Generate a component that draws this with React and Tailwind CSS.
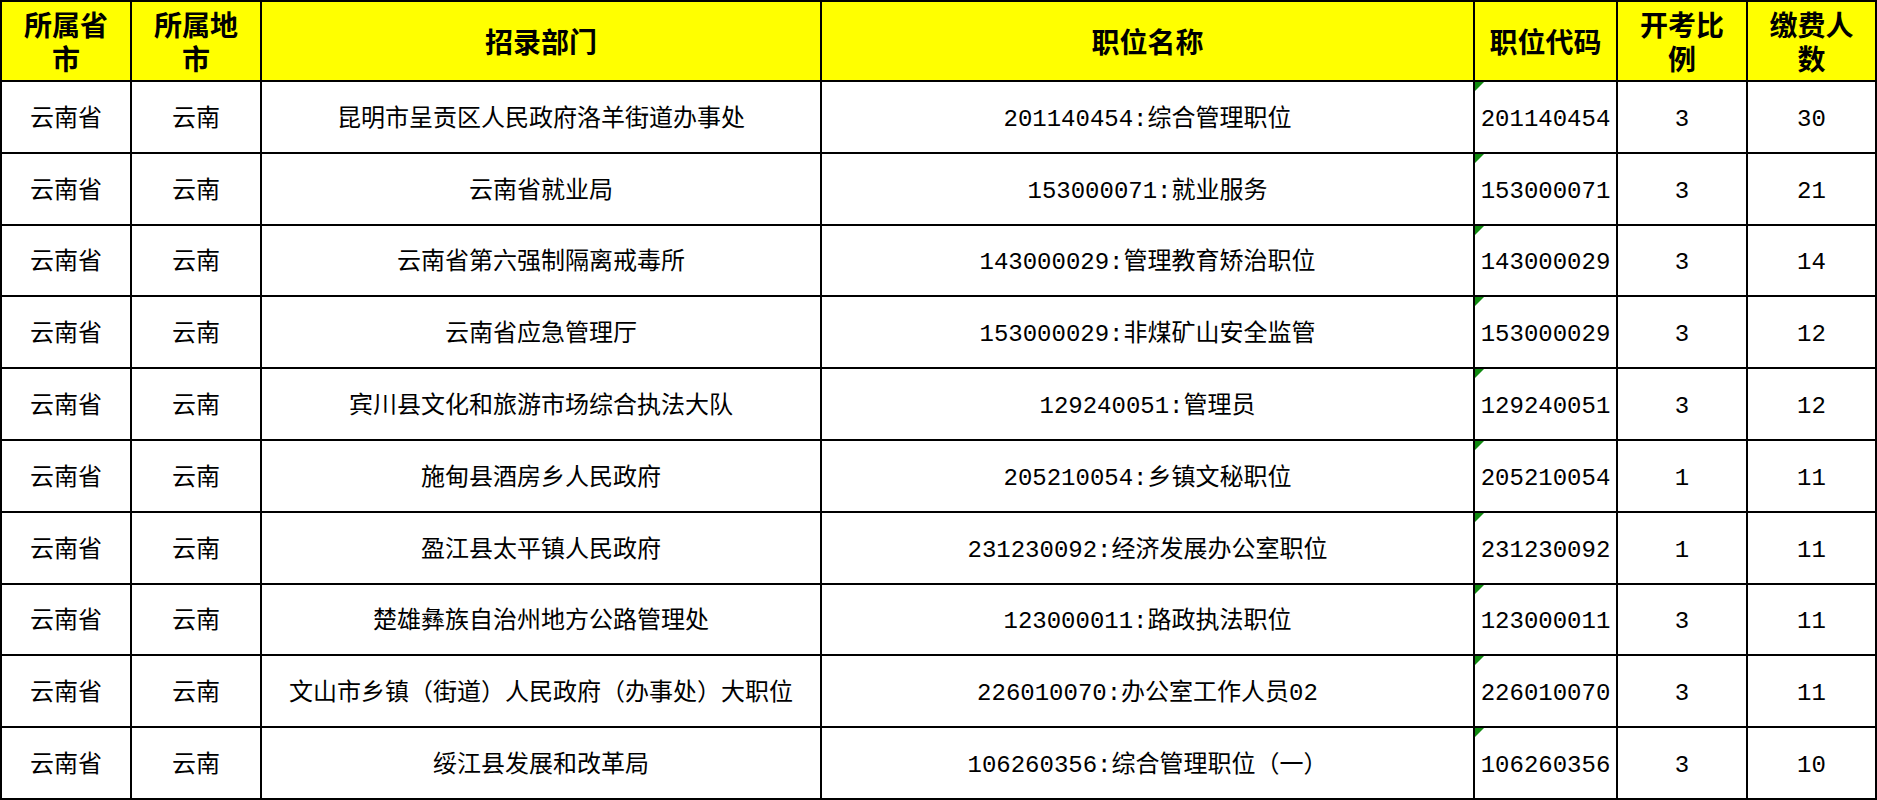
import React from "react";

const rows = [
  ["昆明市呈贡区人民政府洛羊街道办事处", "201140454:综合管理职位", "201140454", "3", "30"],
  ["云南省就业局", "153000071:就业服务", "153000071", "3", "21"],
  ["云南省第六强制隔离戒毒所", "143000029:管理教育矫治职位", "143000029", "3", "14"],
  ["云南省应急管理厅", "153000029:非煤矿山安全监管", "153000029", "3", "12"],
  ["宾川县文化和旅游市场综合执法大队", "129240051:管理员", "129240051", "3", "12"],
  ["施甸县酒房乡人民政府", "205210054:乡镇文秘职位", "205210054", "1", "11"],
  ["盈江县太平镇人民政府", "231230092:经济发展办公室职位", "231230092", "1", "11"],
  ["楚雄彝族自治州地方公路管理处", "123000011:路政执法职位", "123000011", "3", "11"],
  ["文山市乡镇（街道）人民政府（办事处）大职位", "226010070:办公室工作人员02", "226010070", "3", "11"],
  ["绥江县发展和改革局", "106260356:综合管理职位（一）", "106260356", "3", "10"],
];

const headerCell =
  "bg-[#ffff00] flex flex-col items-center justify-center text-center font-bold text-[28px] text-black";
const bodyCell =
  "bg-white flex items-center justify-center text-center text-[24px] leading-[28px] pt-[6px] text-black whitespace-nowrap";

const hf = { fontFamily: '"Noto Sans CJK SC", sans-serif' };

function H({ lines }) {
  return (
    <div className={headerCell} style={hf}>
      {lines.map((l, i) => (
        <span key={i} className="block leading-[34px]">
          {l}
        </span>
      ))}
    </div>
  );
}

export default function App() {
  return (
    <div
      className="w-[1877px] h-[800px] bg-black p-[2px] grid gap-[2px] grid-cols-[128px_128px_558px_651px_141px_128px_127px] grid-rows-[78px_repeat(10,1fr)]"
      style={{ fontFamily: '"Liberation Mono", "Noto Sans CJK SC", monospace' }}
    >
      <H lines={["所属省", "市"]} />
      <H lines={["所属地", "市"]} />
      <H lines={["招录部门"]} />
      <H lines={["职位名称"]} />
      <H lines={["职位代码"]} />
      <H lines={["开考比", "例"]} />
      <H lines={["缴费人", "数"]} />
      {rows.map((r, i) => (
        <React.Fragment key={i}>
          <div className={bodyCell}>云南省</div>
          <div className={bodyCell}>云南</div>
          <div className={bodyCell}>{r[0]}</div>
          <div className={bodyCell}>{r[1]}</div>
          <div className={`${bodyCell} relative`}>
            <span className="absolute left-0 top-0 w-0 h-0 border-t-[9px] border-r-[9px] border-t-[#108a10] border-r-transparent" />
            {r[2]}
          </div>
          <div className={bodyCell}>{r[3]}</div>
          <div className={bodyCell}>{r[4]}</div>
        </React.Fragment>
      ))}
    </div>
  );
}
